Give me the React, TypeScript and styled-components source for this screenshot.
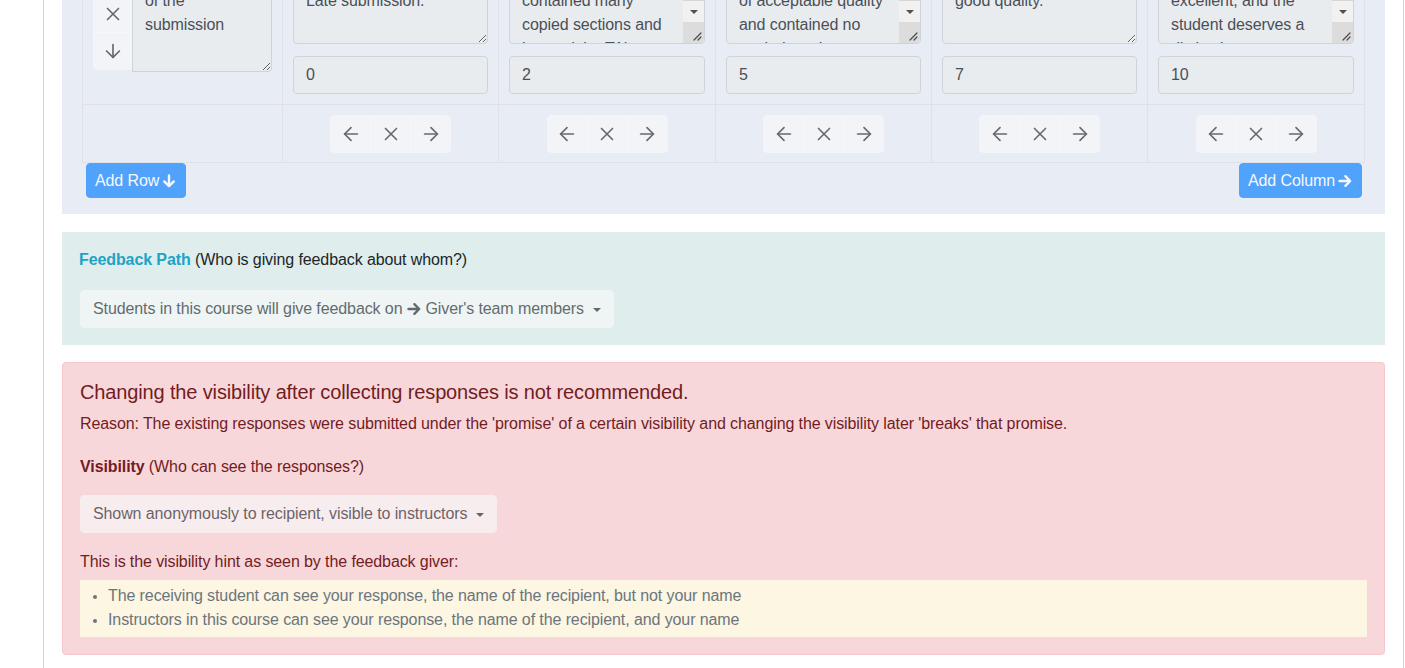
import React from "react";
import styled, { createGlobalStyle } from "styled-components";
import { ArrowLeft, ArrowRight, ArrowUp, ArrowDown, X } from "lucide-react";

const GlobalStyle = createGlobalStyle`
  *, *::before, *::after { box-sizing: border-box; }
  html, body { margin: 0; padding: 0; background: #ffffff; overflow: hidden; }
  body {
    font-family: "Liberation Sans", Arial, sans-serif;
    font-size: 16px;
    line-height: 1.5;
    letter-spacing: -0.1px;
    color: #212529;
  }
`;

const Frame = styled.div`
  margin: -63px 0 0 43px;
  width: 1361px;
  min-height: calc(100vh + 63px);
  border-left: 1px solid #d4d4d4;
  border-right: 1px solid #d4d4d4;
  padding: 0 18px;
`;

const RubricPanel = styled.section`
  background: #e8ecf5;
  padding: 10px 21px 16px 20px;
`;

const RubricTable = styled.table`
  width: 1282px;
  table-layout: fixed;
  border-collapse: collapse;
`;

const Cell = styled.td<{ $center?: boolean }>`
  border: 1px solid #dee2e6;
  padding: ${(p) => (p.$center ? "10px 10px 9px" : "10px")};
  vertical-align: top;
  text-align: ${(p) => (p.$center ? "center" : "left")};
`;

const fieldBase = `
  display: block;
  width: 100%;
  margin: 0;
  font-family: "Liberation Sans", Arial, sans-serif;
  font-size: 16px;
  line-height: 24px;
  letter-spacing: -0.1px;
  color: #495057;
  background: #e9ecef;
  border: 1px solid #ced4da;
  outline: none;
`;

const FieldWrap = styled.div<{ $joined?: boolean }>`
  position: relative;
  flex: ${(p) => (p.$joined ? "1" : "none")};
  min-width: 0;
`;

const DescText = styled.textarea<{ $joined?: boolean; $scroll?: boolean }>`
  ${fieldBase}
  height: ${(p) => (p.$joined ? "114px" : "86px")};
  padding: ${(p) => (p.$scroll ? "6px 33px 6px 12px" : "6px 12px")};
  border-radius: ${(p) => (p.$joined ? "0 4px 4px 0" : "4px")};
  resize: ${(p) => (p.$scroll ? "none" : "vertical")};
  overflow: hidden;
`;

const FakeScrollbar = styled.div`
  position: absolute;
  top: 1px;
  right: 1px;
  bottom: 1px;
  width: 21px;
  display: flex;
  flex-direction: column;
  background: #f1f1f1;
  border-radius: 0 3px 3px 0;
  overflow: hidden;
`;

const ScrollArrow = styled.div<{ $dir: "up" | "down" }>`
  height: 21px;
  flex: none;
  display: flex;
  align-items: center;
  justify-content: center;
  &::before {
    content: "";
    display: block;
    border-left: 4px solid transparent;
    border-right: 4px solid transparent;
    ${(p) =>
      p.$dir === "down"
        ? "border-top: 4px solid #505050; margin-top: 1px;"
        : "border-bottom: 4px solid #505050;"}
  }
`;

const ScrollTrack = styled.div`
  flex: 1;
  position: relative;
  border-bottom: 1px solid #d6d6d6;
`;

const ScrollThumb = styled.div`
  margin: 0 2px;
  height: 14px;
  background: #c1c1c1;
`;

const ScrollCorner = styled.div`
  height: 21px;
  flex: none;
  background: #dcdcdc;
  svg {
    display: block;
  }
`;

const ScoreInput = styled.input`
  ${fieldBase}
  height: 38px;
  margin-top: 12px;
  padding: 6px 12px;
  border-radius: 4px;
`;

const CriterionGroup = styled.div`
  display: flex;
  align-items: stretch;
`;

const SideButtons = styled.div`
  display: flex;
  flex-direction: column;
  width: 39px;
  flex: none;
`;

const LightButton = styled.button<{ $vertical?: boolean; $pos?: "first" | "middle" | "last" }>`
  display: flex;
  align-items: center;
  justify-content: center;
  width: ${(p) => (p.$vertical ? "39px" : "41px")};
  height: 38px;
  padding: 0;
  background: #f8f9fa;
  border: 1px solid #f8f9fa;
  color: #212529;
  opacity: 0.65;
  border-radius: ${(p) =>
    p.$pos === "first"
      ? p.$vertical
        ? "4px 0 0 0"
        : "4px 0 0 4px"
      : p.$pos === "last"
      ? p.$vertical
        ? "0 0 0 4px"
        : "0 4px 4px 0"
      : "0"};
  margin: ${(p) =>
    p.$pos === "first" ? "0" : p.$vertical ? "-1px 0 0 0" : "0 0 0 -1px"};
  svg {
    display: block;
  }
`;

const RowButtons = styled.div`
  display: inline-flex;
`;

const AddBar = styled.div`
  display: flex;
  justify-content: space-between;
  padding: 0 2px 0 4px;
`;

const AddButton = styled.button`
  display: inline-flex;
  align-items: center;
  gap: 3px;
  height: 35px;
  padding: 0 9px 0 8px;
  font-family: "Liberation Sans", Arial, sans-serif;
  font-size: 16px;
  letter-spacing: -0.1px;
  color: #ffffff;
  background: #007bff;
  border: 1px solid #007bff;
  border-radius: 4px;
  opacity: 0.65;
`;

const PathPanel = styled.section`
  margin-top: 18px;
  background: #dfeded;
  padding: 16px 18px 17px 17px;
`;

const FieldLabel = styled.p<{ $gap: number }>`
  margin: 0 0 ${(p) => p.$gap}px;
`;

const PathTitle = styled.b`
  color: #1da3c6;
`;

const DropButton = styled.button<{ $indent?: number }>`
  display: inline-flex;
  align-items: center;
  height: 38px;
  margin-left: ${(p) => p.$indent ?? 0}px;
  padding: 0 12px;
  font-family: "Liberation Sans", Arial, sans-serif;
  font-size: 16px;
  letter-spacing: -0.1px;
  color: #212529;
  background: #f8f9fa;
  border: 1px solid #f8f9fa;
  border-radius: 4px;
  opacity: 0.65;
  white-space: nowrap;
  &::after {
    content: "";
    display: inline-block;
    margin-left: 9px;
    margin-top: 1px;
    border-top: 4px solid;
    border-right: 4px solid transparent;
    border-left: 4px solid transparent;
  }
`;

const InlineArrow = styled.svg`
  margin: 0 4px 0 5px;
  flex: none;
`;

const Alert = styled.section`
  margin-top: 17px;
  padding: 17px;
  background: #f8d7da;
  border: 1px solid #f5c6cb;
  border-radius: 4px;
  color: #721c24;
`;

const AlertTitle = styled.h5`
  margin: 0 0 8px;
  font-size: 20px;
  font-weight: 400;
  line-height: 24px;
  letter-spacing: -0.14px;
`;

const HintIntro = styled.p`
  margin: 17px 0 6px;
`;

const HintList = styled.ul`
  margin: 0;
  padding: 4px 0 5px 28px;
  background: #fcf6e2;
  color: #6c757d;
  li::marker {
    font-size: 13px;
  }
`;

const ThickArrow = ({ dir }: { dir: "down" | "right" }) => (
  <svg width="14" height="14" viewBox="0 0 14 14" fill="none">
    {dir === "down" ? (
      <path
        d="M7 1.5V12M2.2 7.4L7 12.2l4.8-4.8"
        stroke="currentColor"
        strokeWidth="2.4"
        strokeLinecap="round"
        strokeLinejoin="round"
      />
    ) : (
      <path
        d="M1.5 7H12M7.4 2.2L12.2 7l-4.8 4.8"
        stroke="currentColor"
        strokeWidth="2.4"
        strokeLinecap="round"
        strokeLinejoin="round"
      />
    )}
  </svg>
);

const Scrollbar = () => (
  <FakeScrollbar aria-hidden>
    <ScrollArrow $dir="up" />
    <ScrollTrack>
      <ScrollThumb />
    </ScrollTrack>
    <ScrollArrow $dir="down" />
    <ScrollCorner>
      <svg width="21" height="21" viewBox="0 0 21 21">
        <path d="M18 11L11 18M18 15L15 18" stroke="#4a4a4a" strokeWidth="1.2" strokeLinecap="round" />
      </svg>
    </ScrollCorner>
  </FakeScrollbar>
);

type Choice = { text: string; score: string; scroll?: boolean };

const choices: Choice[] = [
  { text: "Poor.\nLate submission.", score: "0" },
  {
    text: "The submission\ncontained many\ncopied sections and\nignored the TA's advice.",
    score: "2",
    scroll: true,
  },
  {
    text: "The submission was\nof acceptable quality\nand contained no\ncopied sections.",
    score: "5",
    scroll: true,
  },
  { text: "The work was of\ngood quality.", score: "7" },
  {
    text: "The work was\nexcellent, and the\nstudent deserves a\ndistinction.",
    score: "10",
    scroll: true,
  },
];

const colWidths = [200, 216, 217, 216, 216, 217];

export default function App() {
  return (
    <>
      <GlobalStyle />
      <Frame>
        <RubricPanel>
          <RubricTable>
            <colgroup>
              {colWidths.map((w, i) => (
                <col key={i} style={{ width: w }} />
              ))}
            </colgroup>
            <tbody>
              <tr>
                <Cell>
                  <CriterionGroup>
                    <SideButtons>
                      <LightButton $vertical $pos="first" aria-label="Move up">
                        <ArrowUp size={22} strokeWidth={1.8} />
                      </LightButton>
                      <LightButton $vertical $pos="middle" aria-label="Delete row">
                        <X size={22} strokeWidth={1.8} />
                      </LightButton>
                      <LightButton $vertical $pos="last" aria-label="Move down">
                        <ArrowDown size={22} strokeWidth={1.8} />
                      </LightButton>
                    </SideButtons>
                    <FieldWrap $joined>
                      <DescText $joined readOnly value={"Timeliness\nof the\nsubmission"} />
                    </FieldWrap>
                  </CriterionGroup>
                </Cell>
                {choices.map((c, i) => (
                  <Cell key={i}>
                    <FieldWrap>
                      <DescText $scroll={c.scroll} readOnly value={c.text} />
                      {c.scroll && <Scrollbar />}
                    </FieldWrap>
                    <ScoreInput readOnly value={c.score} />
                  </Cell>
                ))}
              </tr>
              <tr>
                <Cell />
                {choices.map((_, i) => (
                  <Cell key={i} $center>
                    <RowButtons>
                      <LightButton $pos="first" aria-label="Move left">
                        <ArrowLeft size={22} strokeWidth={1.8} />
                      </LightButton>
                      <LightButton $pos="middle" aria-label="Delete column">
                        <X size={22} strokeWidth={1.8} />
                      </LightButton>
                      <LightButton $pos="last" aria-label="Move right">
                        <ArrowRight size={22} strokeWidth={1.8} />
                      </LightButton>
                    </RowButtons>
                  </Cell>
                ))}
              </tr>
            </tbody>
          </RubricTable>
          <AddBar>
            <AddButton>
              Add Row <ThickArrow dir="down" />
            </AddButton>
            <AddButton>
              Add Column <ThickArrow dir="right" />
            </AddButton>
          </AddBar>
        </RubricPanel>

        <PathPanel>
          <FieldLabel $gap={18}>
            <PathTitle>Feedback Path</PathTitle> (Who is giving feedback about whom?)
          </FieldLabel>
          <DropButton $indent={1}>
            Students in this course will give feedback on
            <InlineArrow width="14" height="14" viewBox="0 0 14 14" fill="none">
              <path
                d="M1.5 7H12M7.4 2.2L12.2 7l-4.8 4.8"
                stroke="currentColor"
                strokeWidth="2.4"
                strokeLinecap="round"
                strokeLinejoin="round"
              />
            </InlineArrow>
            Giver's team members
          </DropButton>
        </PathPanel>

        <Alert>
          <AlertTitle>Changing the visibility after collecting responses is not recommended.</AlertTitle>
          <FieldLabel $gap={19}>
            Reason: The existing responses were submitted under the 'promise' of a certain visibility
            and changing the visibility later 'breaks' that promise.
          </FieldLabel>
          <FieldLabel $gap={16}>
            <b>Visibility</b> (Who can see the responses?)
          </FieldLabel>
          <DropButton>Shown anonymously to recipient, visible to instructors</DropButton>
          <HintIntro>This is the visibility hint as seen by the feedback giver:</HintIntro>
          <HintList>
            <li>The receiving student can see your response, the name of the recipient, but not your name</li>
            <li>Instructors in this course can see your response, the name of the recipient, and your name</li>
          </HintList>
        </Alert>
      </Frame>
    </>
  );
}
